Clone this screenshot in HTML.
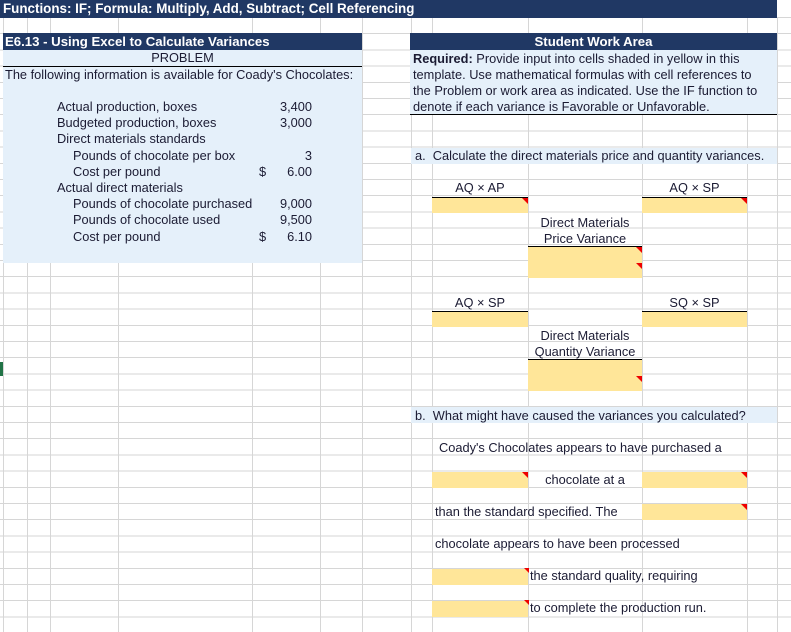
<!DOCTYPE html>
<html><head><meta charset="utf-8"><style>
*{margin:0;padding:0;box-sizing:border-box}
body{width:791px;height:632px;overflow:hidden;background:#fff;position:relative;font-family:"Liberation Sans",Arial,sans-serif;font-size:12.8px;color:#1b1b33}
.g{position:absolute;left:0;top:17px;width:791px;height:615px;background:repeating-linear-gradient(to bottom,#d6d6d6 0 1px,transparent 1px 16.2px)}
.v{position:absolute;top:17px;width:1px;height:615px;background:#d6d6d6}
.a{position:absolute;white-space:nowrap;line-height:16px}
.f{position:absolute}
.y{position:absolute;background:#ffe699;height:16px}
.tri{position:absolute;width:0;height:0;border-top:6px solid #e00;border-left:6px solid transparent}
</style></head><body>
<div class="g"></div>
<div class="v" style="left:3px"></div><div class="v" style="left:27px"></div><div class="v" style="left:50px"></div><div class="v" style="left:118px"></div><div class="v" style="left:252px"></div><div class="v" style="left:320px"></div><div class="v" style="left:362px"></div><div class="v" style="left:411px"></div><div class="v" style="left:432px"></div><div class="v" style="left:528px"></div><div class="v" style="left:642px"></div><div class="v" style="left:747px"></div><div class="v" style="left:777px"></div>
<div class="f" style="left:0;top:362px;width:3px;height:14px;background:#217346"></div>

<div class="f" style="left:0;top:0;width:777px;height:18px;background:#203864"></div>
<div class="a" style="left:3px;top:1px;color:#fff;font-weight:bold;font-size:13.4px">Functions: IF; Formula: Multiply, Add, Subtract; Cell Referencing</div>

<div class="f" style="left:3px;top:33px;width:359px;height:17px;background:#203864"></div>
<div class="a" style="left:5px;top:34px;color:#fff;font-weight:bold;font-size:13.2px">E6.13 - Using Excel to Calculate Variances</div>
<div class="f" style="left:3px;top:50px;width:359px;height:213px;background:#e5f0fa"></div>
<div class="f" style="left:3px;top:66px;width:359px;height:1px;background:#000"></div>
<div class="a" style="left:3px;width:359px;text-align:center;top:50px">PROBLEM</div>
<div class="a" style="left:5px;top:67px">The following information is available for Coady's Chocolates:</div>
<div class="a" style="left:57px;top:99px">Actual production, boxes</div><div class="a" style="left:250px;width:62px;text-align:right;top:99px">3,400</div>
<div class="a" style="left:57px;top:115px">Budgeted production, boxes</div><div class="a" style="left:250px;width:62px;text-align:right;top:115px">3,000</div>
<div class="a" style="left:57px;top:131px">Direct materials standards</div>
<div class="a" style="left:73px;top:148px">Pounds of chocolate per box</div><div class="a" style="left:250px;width:62px;text-align:right;top:148px">3</div>
<div class="a" style="left:73px;top:164px">Cost per pound</div><div class="a" style="left:259px;top:164px">$</div><div class="a" style="left:250px;width:62px;text-align:right;top:164px">6.00</div>
<div class="a" style="left:57px;top:180px">Actual direct materials</div>
<div class="a" style="left:73px;top:196px;width:179px;overflow:hidden">Pounds of chocolate purchased</div><div class="a" style="left:250px;width:62px;text-align:right;top:196px">9,000</div>
<div class="a" style="left:73px;top:212px">Pounds of chocolate used</div><div class="a" style="left:250px;width:62px;text-align:right;top:212px">9,500</div>
<div class="a" style="left:73px;top:229px">Cost per pound</div><div class="a" style="left:259px;top:229px">$</div><div class="a" style="left:250px;width:62px;text-align:right;top:229px">6.10</div>

<div class="f" style="left:410px;top:33px;width:367px;height:17px;background:#203864"></div>
<div class="a" style="left:410px;width:367px;text-align:center;top:34px;color:#fff;font-weight:bold;font-size:13.2px">Student Work Area</div>
<div class="f" style="left:410px;top:50px;width:367px;height:65px;background:#e5f0fa;border-bottom:1px solid #000"></div>
<div class="a" style="left:413px;top:51px"><b>Required:</b> Provide input into cells shaded in yellow in this</div>
<div class="a" style="left:413px;top:67px">template. Use mathematical formulas with cell references to</div>
<div class="a" style="left:413px;top:83px">the Problem or work area as indicated. Use the IF function to</div>
<div class="a" style="left:413px;top:99px">denote if each variance is Favorable or Unfavorable.</div>

<div class="f" style="left:411px;top:148px;width:366px;height:16px;background:#e5f0fa"></div>
<div class="a" style="left:415px;top:148px">a.&nbsp; Calculate the direct materials price and quantity variances.</div>
<div class="a" style="left:432px;width:96px;text-align:center;top:180px">AQ × AP</div>
<div class="a" style="left:642px;width:105px;text-align:center;top:180px">AQ × SP</div>
<div class="y" style="left:432px;top:197px;width:96px;border-top:1px solid #000"></div><div class="tri" style="left:522px;top:198px"></div>
<div class="y" style="left:642px;top:197px;width:105px;border-top:1px solid #000"></div><div class="tri" style="left:741px;top:198px"></div>
<div class="a" style="left:528px;width:114px;text-align:center;top:215px">Direct Materials</div>
<div class="a" style="left:528px;width:114px;text-align:center;top:231px">Price Variance</div>
<div class="y" style="left:528px;top:246px;width:114px;height:32px;border-top:1px solid #000"></div><div class="tri" style="left:636px;top:247px"></div><div class="tri" style="left:636px;top:263px"></div>

<div class="a" style="left:432px;width:96px;text-align:center;top:295px">AQ × SP</div>
<div class="a" style="left:642px;width:105px;text-align:center;top:295px">SQ × SP</div>
<div class="y" style="left:432px;top:311px;width:96px;border-top:1px solid #000"></div>
<div class="y" style="left:642px;top:311px;width:105px;border-top:1px solid #000"></div>
<div class="a" style="left:528px;width:114px;text-align:center;top:328px">Direct Materials</div>
<div class="a" style="left:528px;width:114px;text-align:center;top:344px">Quantity Variance</div>
<div class="y" style="left:528px;top:359px;width:114px;height:32px;border-top:1px solid #000"></div><div class="tri" style="left:636px;top:376px"></div>

<div class="f" style="left:411px;top:407px;width:366px;height:16px;background:#e5f0fa"></div>
<div class="a" style="left:415px;top:408px">b.&nbsp; What might have caused the variances you calculated?</div>
<div class="a" style="left:439px;top:440px">Coady's Chocolates appears to have purchased a</div>
<div class="y" style="left:432px;top:472px;width:96px"></div><div class="tri" style="left:522px;top:472px"></div>
<div class="a" style="left:528px;width:114px;text-align:center;top:472px">chocolate at a</div>
<div class="y" style="left:642px;top:472px;width:105px"></div><div class="tri" style="left:741px;top:472px"></div>
<div class="a" style="left:435px;top:504px">than the standard specified. The</div>
<div class="y" style="left:642px;top:504px;width:105px"></div><div class="tri" style="left:741px;top:504px"></div>
<div class="a" style="left:435px;top:536px">chocolate appears to have been processed</div>
<div class="y" style="left:432px;top:569px;width:96px"></div><div class="tri" style="left:524px;top:568px;border-top-width:5px;border-left-width:5px"></div>
<div class="a" style="left:530px;top:568px">the standard quality, requiring</div>
<div class="y" style="left:432px;top:601px;width:96px"></div><div class="tri" style="left:524px;top:600px;border-top-width:5px;border-left-width:5px"></div>
<div class="a" style="left:530px;top:600px">to complete the production run.</div>
</body></html>
